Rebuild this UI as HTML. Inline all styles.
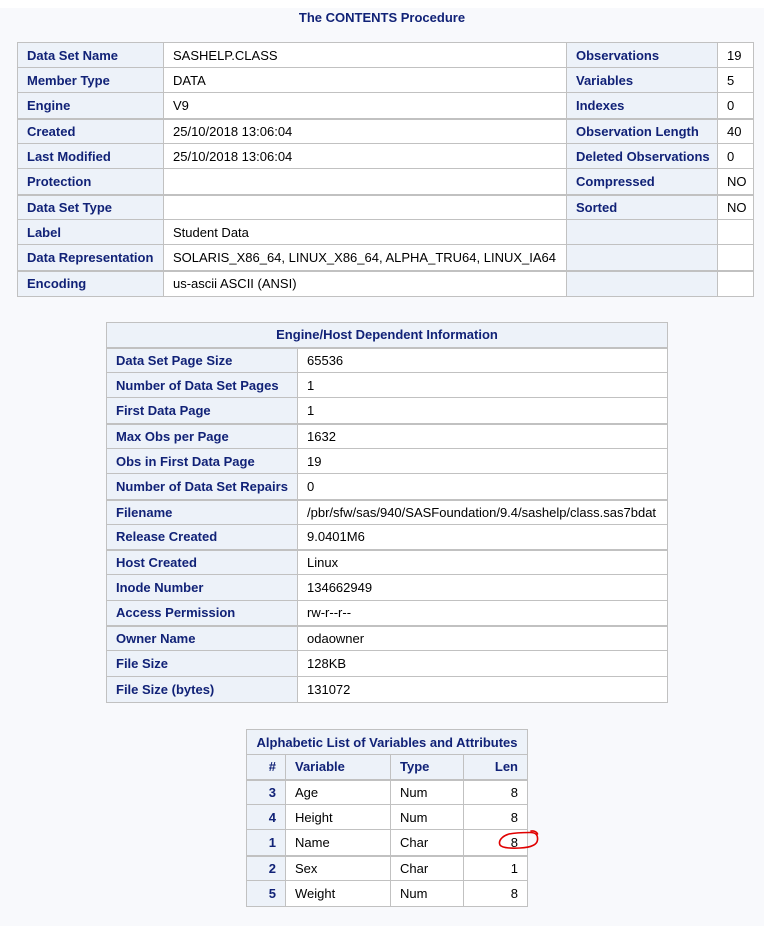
<!DOCTYPE html>
<html><head><meta charset="utf-8"><style>
html,body{margin:0;padding:0}
body{width:764px;height:926px;background:#f8f9fc;position:relative;font-family:"Liberation Sans",Arial,sans-serif;font-size:13px;color:#000;overflow:hidden}
.top{position:absolute;left:0;top:0;width:764px;height:8px;background:#fff}
h1{position:absolute;top:10px;left:0;width:764px;text-align:center;margin:0;font-size:13px;font-weight:bold;color:#112277}
table{position:absolute;border-collapse:collapse;table-layout:fixed;background:#fff}
td,th{border:1px solid #c1c1c1;padding:0 0 0 9px;white-space:nowrap;overflow:hidden;text-align:left;font-weight:normal}
th{background:#edf2f9;color:#112277;font-weight:bold}
tr.g td,tr.g th{border-top:2px solid #c1c1c1}
.c{text-align:center;padding:0}
.r{text-align:right;padding:0 9px 0 0}
</style></head><body>
<div class="top"></div>
<h1>The CONTENTS Procedure</h1>

<table style="left:17px;top:42px;width:736px">
<colgroup><col style="width:146px"><col style="width:403px"><col style="width:151px"><col style="width:36px"></colgroup>
<tr style="height:25px"><th>Data Set Name</th><td>SASHELP.CLASS</td><th>Observations</th><td>19</td></tr>
<tr style="height:25px"><th>Member Type</th><td>DATA</td><th>Variables</th><td>5</td></tr>
<tr style="height:26px"><th>Engine</th><td>V9</td><th>Indexes</th><td>0</td></tr>
<tr class="g" style="height:25px"><th>Created</th><td>25/10/2018 13:06:04</td><th>Observation Length</th><td>40</td></tr>
<tr style="height:25px"><th>Last Modified</th><td>25/10/2018 13:06:04</td><th>Deleted Observations</th><td>0</td></tr>
<tr style="height:26px"><th>Protection</th><td></td><th>Compressed</th><td>NO</td></tr>
<tr class="g" style="height:25px"><th>Data Set Type</th><td></td><th>Sorted</th><td>NO</td></tr>
<tr style="height:25px"><th>Label</th><td>Student Data</td><th></th><td></td></tr>
<tr style="height:26px"><th>Data Representation</th><td>SOLARIS_X86_64, LINUX_X86_64, ALPHA_TRU64, LINUX_IA64</td><th></th><td></td></tr>
<tr class="g" style="height:26px"><th>Encoding</th><td>us-ascii ASCII (ANSI)</td><th></th><td></td></tr>
</table>

<table style="left:106px;top:322px;width:561px">
<colgroup><col style="width:191px"><col style="width:370px"></colgroup>
<tr style="height:25px"><th colspan="2" class="c">Engine/Host Dependent Information</th></tr>
<tr class="g" style="height:25px"><th>Data Set Page Size</th><td>65536</td></tr>
<tr style="height:25px"><th>Number of Data Set Pages</th><td>1</td></tr>
<tr style="height:26px"><th>First Data Page</th><td>1</td></tr>
<tr class="g" style="height:25px"><th>Max Obs per Page</th><td>1632</td></tr>
<tr style="height:25px"><th>Obs in First Data Page</th><td>19</td></tr>
<tr style="height:26px"><th>Number of Data Set Repairs</th><td>0</td></tr>
<tr class="g" style="height:25px"><th>Filename</th><td>/pbr/sfw/sas/940/SASFoundation/9.4/sashelp/class.sas7bdat</td></tr>
<tr style="height:25px"><th>Release Created</th><td>9.0401M6</td></tr>
<tr class="g" style="height:25px"><th>Host Created</th><td>Linux</td></tr>
<tr style="height:26px"><th>Inode Number</th><td>134662949</td></tr>
<tr style="height:25px"><th>Access Permission</th><td>rw-r--r--</td></tr>
<tr class="g" style="height:25px"><th>Owner Name</th><td>odaowner</td></tr>
<tr style="height:26px"><th>File Size</th><td>128KB</td></tr>
<tr style="height:26px"><th>File Size (bytes)</th><td>131072</td></tr>
</table>

<table style="left:246px;top:729px;width:281px">
<colgroup><col style="width:39px"><col style="width:105px"><col style="width:73px"><col style="width:64px"></colgroup>
<tr style="height:25px"><th colspan="4" class="c">Alphabetic List of Variables and Attributes</th></tr>
<tr style="height:25px"><th class="r">#</th><th>Variable</th><th>Type</th><th class="r">Len</th></tr>
<tr class="g" style="height:25px"><th class="r">3</th><td>Age</td><td>Num</td><td class="r">8</td></tr>
<tr style="height:25px"><th class="r">4</th><td>Height</td><td>Num</td><td class="r">8</td></tr>
<tr style="height:26px"><th class="r">1</th><td>Name</td><td>Char</td><td class="r">8</td></tr>
<tr class="g" style="height:25px"><th class="r">2</th><td>Sex</td><td>Char</td><td class="r">1</td></tr>
<tr style="height:26px"><th class="r">5</th><td>Weight</td><td>Num</td><td class="r">8</td></tr>
</table>
<svg style="position:absolute;left:490px;top:822px" width="60" height="35"><path d="M19 12 C12 14 8 19 10 23 C12 26 20 26.5 30 26 C40 25.5 47 23 47.5 18 C48 13 46 10.5 40 10.5 C32 10.5 24 11 19 12 M41 9 C44 8.5 47 10 47.5 12" fill="none" stroke="#e00000" stroke-width="1.6" stroke-linecap="round"/></svg>
</body></html>
